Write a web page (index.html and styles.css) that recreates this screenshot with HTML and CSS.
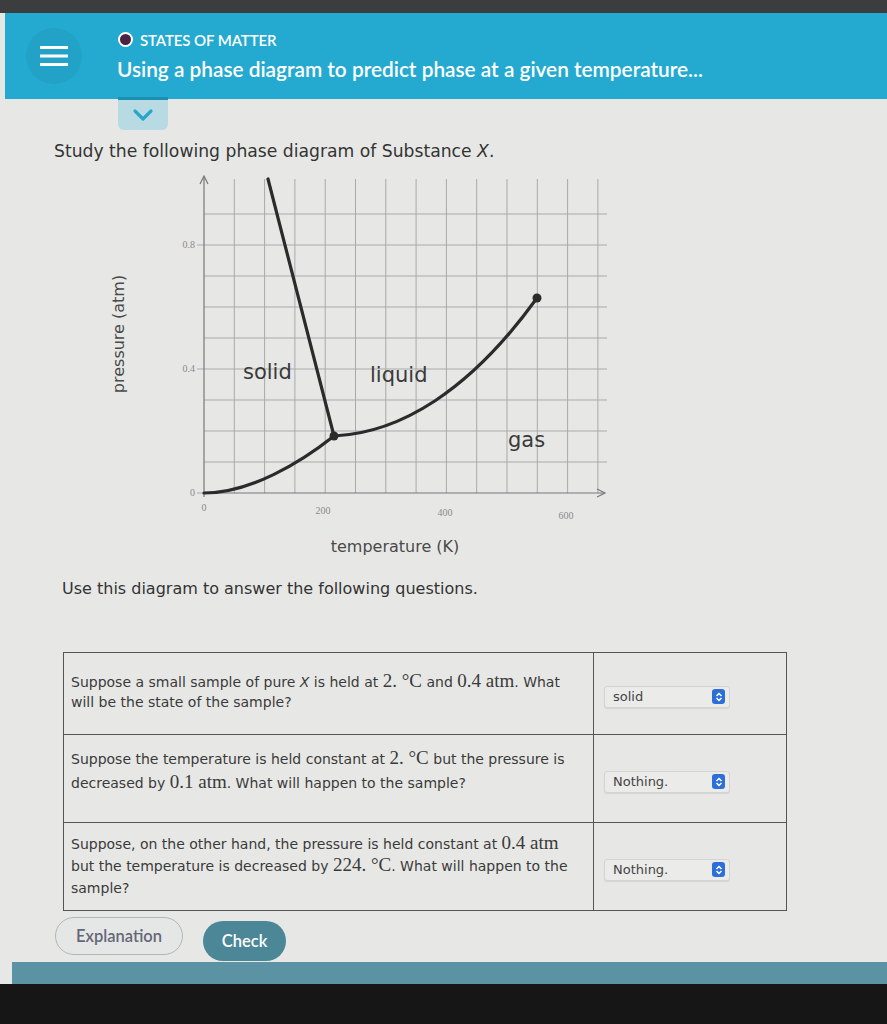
FILE: index.html
```html
<!DOCTYPE html>
<html>
<head>
<meta charset="utf-8">
<link rel="stylesheet" href="styles.css">
</head>
<body>
<div class="topbar"></div>
<header class="header">
  <div class="menu">
    <svg width="28" height="22" viewBox="0 0 28 22"><rect x="0" y="1" width="28" height="3" fill="#fff"/><rect x="0" y="9.5" width="28" height="3" fill="#fff"/><rect x="0" y="18" width="28" height="3" fill="#fff"/></svg>
  </div>
  <div class="titles">
    <div class="topic"><span class="dot"></span>STATES OF MATTER</div>
    <div class="title">Using a phase diagram to predict phase at a given temperature...</div>
  </div>
</header>
<div class="tab">
  <svg width="22" height="14" viewBox="0 0 22 14"><path d="M3 3 L11 11 L19 3" fill="none" stroke="#2aa6cb" stroke-width="3.2" stroke-linecap="round" stroke-linejoin="round"/></svg>
</div>
<main class="content">
  <p class="intro">Study the following phase diagram of Substance <i>X</i>.</p>
  <svg class="chart" width="520" height="390" viewBox="100 170 520 390">
    <g stroke="#a9a9a9" stroke-width="1">
      <line x1="234.3" y1="178" x2="234.3" y2="492"/>
      <line x1="264.6" y1="178" x2="264.6" y2="492"/>
      <line x1="294.9" y1="178" x2="294.9" y2="492"/>
      <line x1="325.2" y1="178" x2="325.2" y2="492"/>
      <line x1="355.5" y1="178" x2="355.5" y2="492"/>
      <line x1="385.8" y1="178" x2="385.8" y2="492"/>
      <line x1="416.1" y1="178" x2="416.1" y2="492"/>
      <line x1="446.4" y1="178" x2="446.4" y2="492"/>
      <line x1="476.7" y1="178" x2="476.7" y2="492"/>
      <line x1="507" y1="178" x2="507" y2="492"/>
      <line x1="537.3" y1="178" x2="537.3" y2="492"/>
      <line x1="567.6" y1="178" x2="567.6" y2="492"/>
      <line x1="597.9" y1="178" x2="597.9" y2="492"/>
      <line x1="204" y1="461" x2="607" y2="461"/>
      <line x1="204" y1="430" x2="607" y2="430"/>
      <line x1="204" y1="399" x2="607" y2="399"/>
      <line x1="197" y1="368" x2="607" y2="368"/>
      <line x1="204" y1="337" x2="607" y2="337"/>
      <line x1="204" y1="306" x2="607" y2="306"/>
      <line x1="204" y1="275" x2="607" y2="275"/>
      <line x1="197" y1="244" x2="607" y2="244"/>
      <line x1="204" y1="213" x2="607" y2="213"/>
      <line x1="197" y1="492" x2="204" y2="492"/>
    </g>
    <g stroke="#777" stroke-width="1.2" fill="none">
      <line x1="204" y1="496" x2="204" y2="176"/>
      <path d="M200 183 L204 175 L208 183"/>
      <line x1="204" y1="492" x2="604" y2="492"/>
      <path d="M597 488 L605 492 L597 496"/>
    </g>
    <g stroke="#2b2b2b" stroke-width="3.2" fill="none" stroke-linecap="round">
      <path d="M268 178 L334 435"/>
      <path d="M204 492 C 250 492 300 462 334 435"/>
      <path d="M334 435 C 400 432 470 390 537 297"/>
    </g>
    <circle cx="334" cy="435" r="4.5" fill="#2b2b2b"/>
    <circle cx="537" cy="297" r="4.5" fill="#2b2b2b"/>
    <g class="tick">
      <text x="195" y="247" text-anchor="end">0.8</text>
      <text x="195" y="371" text-anchor="end">0.4</text>
      <text x="195" y="495" text-anchor="end">0</text>
      <text x="204" y="510" text-anchor="middle">0</text>
      <text x="323" y="513" text-anchor="middle">200</text>
      <text x="445" y="515" text-anchor="middle">400</text>
      <text x="566" y="518" text-anchor="middle">600</text>
    </g>
    <g class="region">
      <text x="243" y="378">solid</text>
      <text x="370" y="381">liquid</text>
      <text x="508" y="446">gas</text>
    </g>
    <text class="axis" x="395" y="551" text-anchor="middle">temperature (K)</text>
    <text class="axis" transform="translate(124 333) rotate(-90)" text-anchor="middle">pressure (atm)</text>
  </svg>
  <p class="use">Use this diagram to answer the following questions.</p>
  <table class="qtable">
    <tr class="r1">
      <td class="q">Suppose a small sample of pure <i>X</i> is held at <span class="m">2. °C</span> and <span class="m">0.4 atm</span>. What<br>will be the state of the sample?</td>
      <td class="a"><div class="select">solid<span class="arrows"><svg width="8" height="10" viewBox="0 0 8 10"><path d="M1.5 4 L4 1.5 L6.5 4 M1.5 6 L4 8.5 L6.5 6" fill="none" stroke="#fff" stroke-width="1.5"/></svg></span></div></td>
    </tr>
    <tr class="r2">
      <td class="q">Suppose the temperature is held constant at <span class="m">2. °C</span> but the pressure is<br>decreased by <span class="m">0.1 atm</span>. What will happen to the sample?</td>
      <td class="a"><div class="select">Nothing.<span class="arrows"><svg width="8" height="10" viewBox="0 0 8 10"><path d="M1.5 4 L4 1.5 L6.5 4 M1.5 6 L4 8.5 L6.5 6" fill="none" stroke="#fff" stroke-width="1.5"/></svg></span></div></td>
    </tr>
    <tr class="r3">
      <td class="q">Suppose, on the other hand, the pressure is held constant at <span class="m">0.4 atm</span><br>but the temperature is decreased by <span class="m">224. °C</span>. What will happen to the<br>sample?</td>
      <td class="a"><div class="select">Nothing.<span class="arrows"><svg width="8" height="10" viewBox="0 0 8 10"><path d="M1.5 4 L4 1.5 L6.5 4 M1.5 6 L4 8.5 L6.5 6" fill="none" stroke="#fff" stroke-width="1.5"/></svg></span></div></td>
    </tr>
  </table>
  <div class="actions">
    <button class="btn explain">Explanation</button>
    <button class="btn check">Check</button>
  </div>
</main>
<div class="footbar"></div>
<div class="bezel"></div>
</body>
</html>
```
FILE: styles.css
```css
html, body {
  margin: 0;
  padding: 0;
}
body {
  background: #e7e8e6;
  width: 887px;
  height: 1024px;
  overflow: hidden;
  font-family: "DejaVu Sans", Verdana, sans-serif;
  color: #333;
}
.topbar {
  height: 13px;
  background: #3c3d3e;
}
.header {
  height: 86px;
  margin-left: 5px;
  background: #24aad0;
  display: flex;
  align-items: center;
  padding-left: 21px;
  box-sizing: border-box;
}
.menu {
  width: 56px;
  height: 56px;
  border-radius: 50%;
  background: #21a2c6;
  display: flex;
  align-items: center;
  justify-content: center;
  flex: none;
}
.titles {
  margin-left: 35px;
  color: #fff;
  font-family: Lato, "Open Sans", sans-serif;
  margin-top: -2px;
}
.topic {
  display: flex;
  align-items: center;
  font-size: 15px;
  font-weight: 600;
  letter-spacing: -0.1px;
  height: 20px;
}
.dot {
  width: 11px;
  height: 11px;
  border-radius: 50%;
  background: #4a2342;
  border: 2px solid #fff;
  margin-right: 7px;
  margin-left: 1px;
}
.title {
  font-size: 20.8px;
  font-weight: 600;
  margin-top: 6px;
  letter-spacing: 0;
}
.tab {
  margin-left: 118px;
  margin-top: -2px;
  width: 50px;
  height: 33px;
  background: #b8dbe3;
  border-top: 3px solid #1b8fb0;
  border-radius: 0 0 6px 6px;
  display: flex;
  justify-content: center;
  align-items: center;
  box-sizing: border-box;
}
.content {
  padding-left: 54px;
}
.intro {
  margin: 9px 0 0 0;
  font-size: 17.2px;
  line-height: 24px;
  color: #333;
}
.chart {
  display: block;
  margin-left: 46px;
  margin-top: 8px;
}
.tick text {
  font-family: "Liberation Serif", serif;
  font-size: 10px;
  fill: #8a8a8a;
}
.region text {
  font-family: "DejaVu Sans", sans-serif;
  font-size: 21px;
  fill: #3a3a3a;
}
.axis {
  font-family: "DejaVu Sans", sans-serif;
  font-size: 16px;
  fill: #4a4a4a;
}
.use {
  margin: 17px 0 0 8px;
  font-size: 16px;
  line-height: 22px;
}
.qtable {
  margin: 52px 0 0 9px;
  border-collapse: collapse;
  width: 724px;
  font-size: 14px;
  color: #3a3a3a;
}
.qtable td {
  border: 1px solid #555;
  vertical-align: top;
}
.q {
  width: 512px;
  padding: 18px 10px 8px 7px;
  line-height: 20px;
}
.r1 { height: 82px; }
.r2 { height: 88px; }
.r3 { height: 88px; }
.r2 .q { line-height: 24px; padding-top: 12px; }
.r3 .q { line-height: 22px; padding-top: 10px; }
.a {
  vertical-align: middle !important;
  padding: 0 10px;
}
.m {
  font-family: "Liberation Serif", serif;
  font-size: 19px;
  line-height: 1;
}
.select {
  width: 126px;
  height: 22px;
  box-sizing: border-box;
  border: 1px solid #d4d4d4;
  border-radius: 3px;
  background: #ebebea;
  box-shadow: 0 1px 1px rgba(0,0,0,0.08);
  font-size: 13px;
  color: #444;
  display: flex;
  align-items: center;
  justify-content: space-between;
  padding: 0 4px 0 8px;
  margin-top: 6px;
}
.arrows {
  width: 13px;
  height: 15px;
  border-radius: 3px;
  background: #2d6fd9;
  display: flex;
  align-items: center;
  justify-content: center;
}
.actions {
  display: flex;
  gap: 20px;
  margin: 6px 0 0 1px;
  align-items: flex-start;
}
.btn {
  font-family: Lato, "Open Sans", sans-serif;
  font-weight: 600;
  font-size: 16.5px;
  border-radius: 20px;
  height: 38px;
  padding: 0 16px;
}
.explain {
  background: #e5e7e7;
  border: 1.5px solid #b3b6b8;
  color: #667;
  width: 128px;
}
.check {
  background: #4b8797;
  border: none;
  color: #fff;
  width: 83px;
  height: 40px;
  margin-top: 4px;
}
.footbar {
  position: absolute;
  left: 12px;
  right: 0;
  top: 962px;
  height: 22px;
  background: #5b93a5;
}
.bezel {
  position: absolute;
  left: 0;
  right: 0;
  top: 984px;
  bottom: 0;
  background: #161616;
}
```
